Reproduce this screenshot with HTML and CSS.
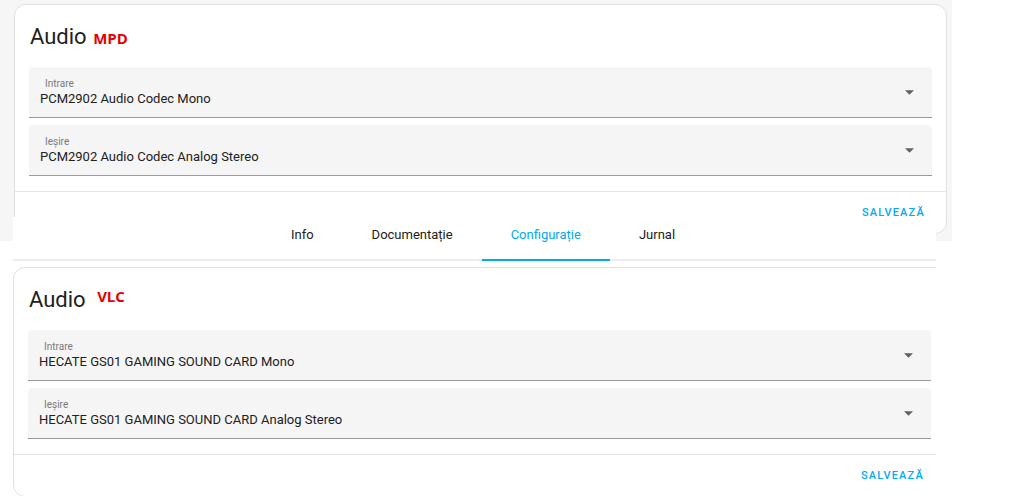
FILE: index.html
```html
<!DOCTYPE html>
<html lang="ro">
  <head>
    <meta charset="UTF-8" />
    <meta name="viewport" content="width=device-width, initial-scale=1.0" />
    <title>Audio - MPD / VLC</title>
    <link rel="stylesheet" href="styles.css">
  </head>
  <body>
    <!-- MPD card -->
    <div class="shot shot-top">
      <div class="card">
        <div class="card-header">Audio <span class="tag">MPD</span></div>
        <div class="card-content">
          <div class="field">
            <div class="field-text">
              <div class="field-label">Intrare</div>
              <div class="field-value">PCM2902 Audio Codec Mono</div>
            </div>
            <svg class="arrow" viewBox="0 0 10 5"><polygon points="0,0 10,0 5,5" /></svg>
          </div>
          <div class="field">
            <div class="field-text">
              <div class="field-label">Ieșire</div>
              <div class="field-value">PCM2902 Audio Codec Analog Stereo</div>
            </div>
            <svg class="arrow" viewBox="0 0 10 5"><polygon points="0,0 10,0 5,5" /></svg>
          </div>
        </div>
        <div class="card-actions"><span class="btn">Salvează</span></div>
      </div>
    </div>

    <!-- Tabs + VLC card -->
    <div class="shot shot-bottom">
      <div class="tabs">
        <a href="#" class="tab">Info</a>
        <a href="#" class="tab">Documentație</a>
        <a href="#" class="tab active">Configurație</a>
        <a href="#" class="tab">Jurnal</a>
      </div>
      <div class="card">
        <div class="card-header">Audio <span class="tag tag-raised">VLC</span></div>
        <div class="card-content">
          <div class="field">
            <div class="field-text">
              <div class="field-label">Intrare</div>
              <div class="field-value">HECATE GS01 GAMING SOUND CARD Mono</div>
            </div>
            <svg class="arrow" viewBox="0 0 10 5"><polygon points="0,0 10,0 5,5" /></svg>
          </div>
          <div class="field">
            <div class="field-text">
              <div class="field-label">Ieșire</div>
              <div class="field-value">HECATE GS01 GAMING SOUND CARD Analog Stereo</div>
            </div>
            <svg class="arrow" viewBox="0 0 10 5"><polygon points="0,0 10,0 5,5" /></svg>
          </div>
        </div>
        <div class="card-actions"><span class="btn">Salvează</span></div>
      </div>
    </div>
  </body>
</html>
```
FILE: styles.css
```css
/* Global Reset */
* {
  margin: 0;
  padding: 0;
  box-sizing: border-box;
}

body {
  font-family: Roboto, "Liberation Sans", sans-serif;
  background-color: #fff;
  color: #212121;
  overflow: hidden;
}

/* Screenshot pieces */
.shot-top {
  width: 952px;
  height: 241px;
  padding: 4px 0 0 14px;
  background-color: #f6f6f6;
}

.shot-bottom {
  position: relative;
  width: 923px;
  margin: -24px 0 0 13px;
  background-color: #fff;
  overflow: hidden;
}

/* Card */
.card {
  width: 933px;
  background-color: #fff;
  border: 1px solid #e0e0e0;
  border-radius: 12px;
}

.card-header {
  height: 48px;
  padding: 16px 15px 0;
  font-size: 22px;
  line-height: 32px;
  color: #212121;
}

.tag {
  margin-left: 1px;
  font-family: "Open Sans", sans-serif;
  font-weight: 700;
  font-size: 15px;
  line-height: 1;
  color: #e60000;
}

.tag-raised {
  margin-left: 6px;
  vertical-align: 5px;
}

.card-content {
  display: flex;
  flex-direction: column;
  gap: 7px;
  padding: 14px 14px 15px;
}

/* Select field */
.field {
  display: flex;
  height: 51px;
  background-color: #f5f5f5;
  border-bottom: 1px solid #9a9a9a;
  border-radius: 4px 4px 0 0;
}

.field-text {
  flex: 1;
  padding-top: 10px;
}

.field-label {
  padding-left: 16px;
  font-size: 10px;
  line-height: 14px;
  color: #7a7a7a;
}

.field-value {
  margin-top: -1px;
  padding-left: 11px;
  font-size: 13px;
  line-height: 18px;
  color: #212121;
}

.arrow {
  align-self: center;
  width: 9px;
  height: 5px;
  margin-right: 18px;
  fill: #616161;
}

/* Actions */
.card-actions {
  display: flex;
  align-items: center;
  justify-content: flex-end;
  height: 42px;
  padding-right: 21px;
  border-top: 1px solid #e3e3e3;
}

.btn {
  font-size: 11px;
  font-weight: 500;
  letter-spacing: 1.2px;
  text-transform: uppercase;
  color: #03a9f4;
}

/* Tabs */
.tabs {
  display: flex;
  justify-content: center;
  height: 44px;
  margin-bottom: 6px;
  padding-left: 17px;
  border-bottom: 2px solid #ececec;
}

.tab {
  display: flex;
  align-items: center;
  height: 44px;
  margin-bottom: -2px;
  padding: 0 29px 8px;
  border-bottom: 2px solid transparent;
  font-size: 13px;
  color: #212121;
  text-decoration: none;
}

.tab.active {
  color: #03a9f4;
  border-bottom-color: #03a9f4;
}
```
